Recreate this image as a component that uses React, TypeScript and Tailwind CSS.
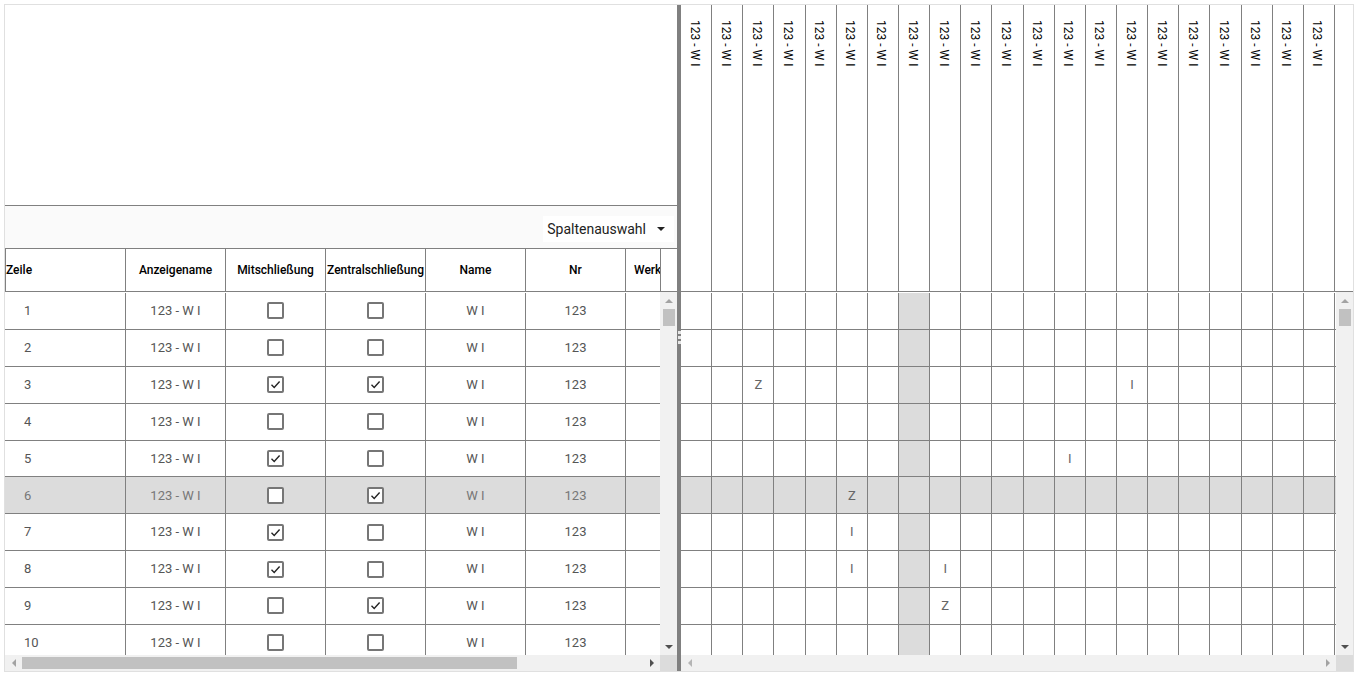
import React from "react";

const ROWS = 10;
const COLS = 21;
const mit = [false, false, true, false, true, false, true, true, false, false];
const zen = [false, false, true, false, false, true, false, false, true, false];
const marks: Record<string, string> = {
  "3-3": "Z",
  "3-15": "I",
  "5-13": "I",
  "6-6": "Z",
  "7-6": "I",
  "8-6": "I",
  "8-9": "I",
  "9-9": "Z",
};

function Check({ on }: { on: boolean }) {
  return (
    <div className="w-[17px] h-[17px] border-2 border-[#767676] rounded-[2px] bg-white flex items-center justify-center">
      {on && (
        <svg width="13" height="13" viewBox="0 0 13 13">
          <path d="M2.5 6.8 L5.2 9.4 L10.6 3.6" fill="none" stroke="#222" strokeWidth="1.4" />
        </svg>
      )}
    </div>
  );
}

function Up({ c }: { c: string }) {
  return <div className="w-0 h-0 border-x-[4px] border-x-transparent border-b-[4px]" style={{ borderBottomColor: c }} />;
}
function Down({ c }: { c: string }) {
  return <div className="w-0 h-0 border-x-[4px] border-x-transparent border-t-[4px]" style={{ borderTopColor: c }} />;
}
function Left({ c }: { c: string }) {
  return <div className="w-0 h-0 border-y-[4px] border-y-transparent border-r-[4px]" style={{ borderRightColor: c }} />;
}
function Right({ c }: { c: string }) {
  return <div className="w-0 h-0 border-y-[4px] border-y-transparent border-l-[4px]" style={{ borderLeftColor: c }} />;
}

function VScroll() {
  return (
    <div className="w-[17px] h-full bg-[#f1f1f1] flex flex-col items-center shrink-0">
      <div className="h-[17px] flex items-center justify-center">
        <Up c="#a3a3a3" />
      </div>
      <div className="w-[12px] h-[17px] bg-[#c1c1c1]" />
      <div className="flex-1" />
      <div className="h-[17px] flex items-center justify-center">
        <Down c="#505050" />
      </div>
    </div>
  );
}

export default function App() {
  const rows = Array.from({ length: ROWS }, (_, i) => i + 1);
  const cols = Array.from({ length: COLS }, (_, i) => i + 1);
  return (
    <div className="p-[4px] bg-white font-[Roboto,'Noto_Sans',sans-serif]">
      <div className="flex w-[1350px] h-[668px] border border-[#e0e0e0] overflow-hidden">
        {/* LEFT PANEL */}
        <div className="w-[672px] h-full flex flex-col shrink-0">
          <div className="h-[201px] border-b border-[#808080] bg-white shrink-0" />
          <div className="h-[43px] border-b border-[#808080] bg-[#fafafa] flex justify-end items-start pt-[10px] pr-[3px] shrink-0">
            <div className="h-[26px] bg-white flex items-center pl-[4px] pr-[9px] gap-[11px] text-[14px] text-[#222]">
              <span>Spaltenauswahl</span>
              <Down c="#222" />
            </div>
          </div>
          <div className="h-[43px] border-b border-[#808080] flex shrink-0 text-[12px] font-medium text-black">
            <div className="w-[655px] flex overflow-hidden">
              <div className="w-[121px] shrink-0 border-l border-r border-[#808080] flex items-center">Zeile</div>
              {["Anzeigename", "Mitschließung", "Zentralschließung", "Name", "Nr"].map((h) => (
                <div key={h} className="w-[100px] shrink-0 border-r border-[#808080] flex items-center justify-center whitespace-nowrap overflow-hidden">
                  {h}
                </div>
              ))}
              <div className="w-[100px] shrink-0 flex items-center pl-[8px]">Werk</div>
            </div>
            <div className="w-[17px] border-l border-[#808080] bg-white" />
          </div>
          <div className="flex-1 flex min-h-0">
            <div className="w-[655px] overflow-hidden pt-[1px] text-[13px]">
              {rows.map((r) => {
                const sel = r === 6;
                return (
                  <div
                    key={r}
                    className={`h-[36.875px] flex border-b border-[#808080] ${sel ? "bg-[#dcdcdc] text-[#777]" : "bg-white text-[#555]"}`}
                  >
                    <div className="w-[121px] shrink-0 border-r border-[#808080] flex items-center pl-[19px]">{r}</div>
                    <div className="w-[100px] shrink-0 border-r border-[#808080] flex items-center justify-center">123 - W I</div>
                    <div className="w-[100px] shrink-0 border-r border-[#808080] flex items-center justify-center">
                      <Check on={mit[r - 1]} />
                    </div>
                    <div className="w-[100px] shrink-0 border-r border-[#808080] flex items-center justify-center">
                      <Check on={zen[r - 1]} />
                    </div>
                    <div className="w-[100px] shrink-0 border-r border-[#808080] flex items-center justify-center">W I</div>
                    <div className="w-[100px] shrink-0 border-r border-[#808080] flex items-center justify-center">123</div>
                    <div className="w-[100px] shrink-0 border-r border-[#808080]" />
                  </div>
                );
              })}
            </div>
            <VScroll />
          </div>
          <div className="h-[16px] flex shrink-0">
            <div className="w-[655px] bg-[#f1f1f1] flex items-center">
              <div className="w-[17px] flex justify-center">
                <Left c="#a3a3a3" />
              </div>
              <div className="w-[495px] h-[12px] bg-[#c1c1c1]" />
              <div className="flex-1" />
              <div className="w-[17px] flex justify-center">
                <Right c="#505050" />
              </div>
            </div>
            <div className="w-[17px] bg-[#dcdcdc]" />
          </div>
        </div>

        {/* DIVIDER */}
        <div className="w-[4px] h-full bg-[#808080] shrink-0 flex flex-col items-center pt-[326px] gap-[2px]">
          <div className="w-[3px] h-[3px] bg-[#e6e6e6]" />
          <div className="w-[3px] h-[3px] bg-[#e6e6e6]" />
          <div className="w-[3px] h-[3px] bg-[#e6e6e6]" />
        </div>

        {/* RIGHT PANEL */}
        <div className="w-[672px] h-full flex flex-col shrink-0">
          <div className="h-[287px] border-b border-[#808080] flex shrink-0 bg-white">
            {cols.map((c) => (
              <div key={c} className="w-[31.15px] shrink-0 border-r border-[#808080] flex justify-center pt-[15px] pr-[3px]">
                <span className="[writing-mode:vertical-rl] text-[12px] text-black whitespace-nowrap leading-[14px]">123 - W I</span>
              </div>
            ))}
          </div>
          <div className="flex-1 flex min-h-0">
            <div className="w-[655px] overflow-hidden pt-[1px] text-[13px] text-[#666]">
              {rows.map((r) => (
                <div key={r} className={`h-[36.875px] flex border-b border-[#808080] ${r === 6 ? "bg-[#dcdcdc]" : ""}`}>
                  {cols.map((c) => (
                    <div
                      key={c}
                      className={`w-[31.15px] shrink-0 border-r border-[#808080] flex items-center justify-center ${c === 8 ? "bg-[#dcdcdc]" : ""}`}
                    >
                      {marks[`${r}-${c}`] ?? ""}
                    </div>
                  ))}
                </div>
              ))}
            </div>
            <VScroll />
          </div>
          <div className="h-[16px] flex shrink-0">
            <div className="w-[655px] bg-[#f1f1f1] flex items-center">
              <div className="w-[17px] flex justify-center">
                <Left c="#b5b5b5" />
              </div>
              <div className="flex-1" />
              <div className="w-[17px] flex justify-center">
                <Right c="#a3a3a3" />
              </div>
            </div>
            <div className="w-[17px] bg-[#dcdcdc]" />
          </div>
        </div>
      </div>
    </div>
  );
}
